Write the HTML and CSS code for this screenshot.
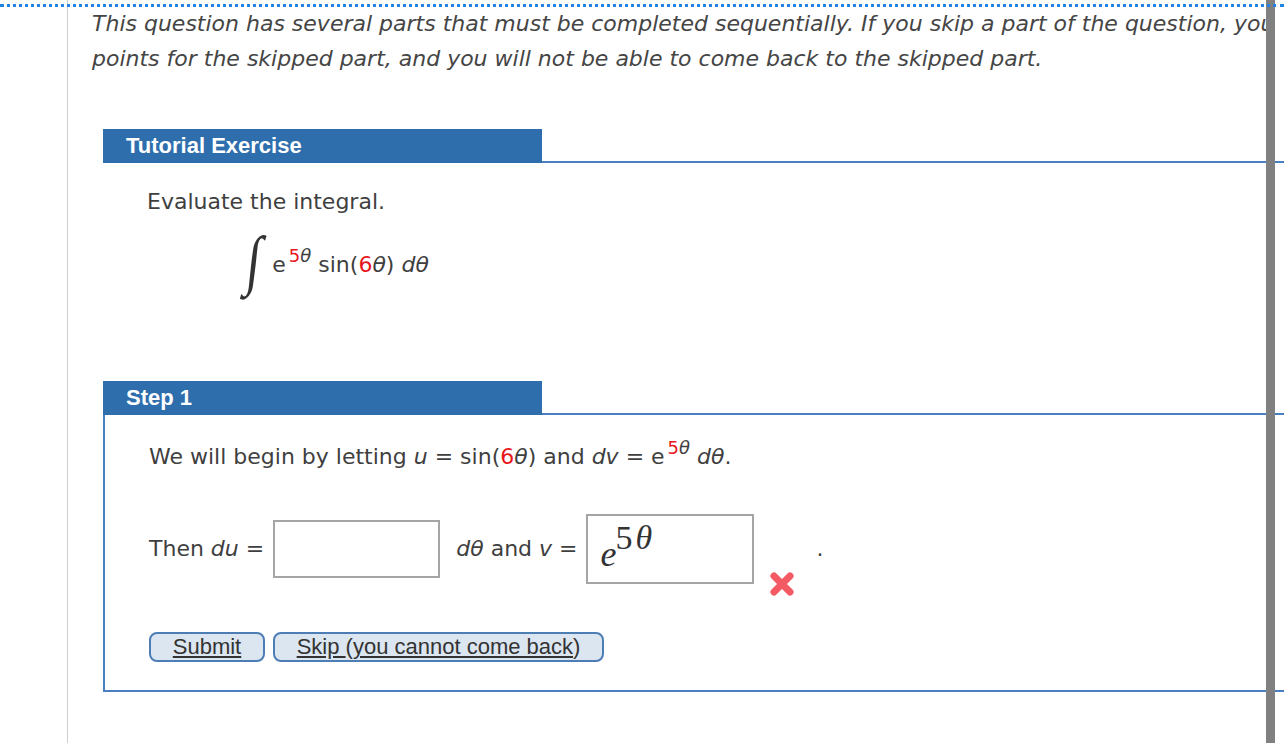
FILE: index.html
```html
<!DOCTYPE html>
<html>
<head>
<meta charset="utf-8">
<link rel="stylesheet" href="styles.css">
</head>
<body>
<div class="frame">
  <div class="gutter"></div>
  <div class="main">
    <p class="intro">This question has several parts that must be completed sequentially. If you skip a part of the question, you<br>points for the skipped part, and you will not be able to come back to the skipped part.</p>

    <section class="sec">
      <div class="sec-head"><div class="tab">Tutorial Exercise</div><div class="rule"></div></div>
      <div class="tut-body">
        <p class="txt">Evaluate the integral.</p>
        <div class="integral">
          <span class="int-sign">∫</span>
          <span class="int-expr">e<sup class="sup"><span class="red">5</span><i>θ</i></sup>sin(<span class="red">6</span><i>θ</i>) <i>d</i><i>θ</i></span>
        </div>
      </div>
    </section>

    <section class="sec step">
      <div class="sec-head"><div class="tab">Step 1</div><div class="rule"></div></div>
      <div class="step-body">
        <p class="txt">We will begin by letting <i>u</i> = sin(<span class="red">6</span><i>θ</i>) and <i>dv</i> = e<sup class="sup"><span class="red">5</span><i>θ</i></sup><i>dθ</i>.</p>
        <div class="ans-row">
          <span class="txt">Then <i>du</i> =</span>
          <span class="box box-du"></span>
          <span class="txt"><i>dθ</i> and <i>v</i> =</span>
          <span class="box box-v"><span class="mj-e">e</span><span class="mj-sup">5<i>θ</i></span></span>
          <svg class="xmark" width="30" height="30" viewBox="0 0 30 30"><path d="M7 7 L23 23 M23 7 L7 23" stroke="#f2444f" stroke-width="7" stroke-linecap="round" opacity="0.88"/></svg>
          <span class="txt dot">.</span>
        </div>
        <div class="buttons">
          <button class="btn btn-submit">Submit</button>
          <button class="btn btn-skip"><span class="u">Skip </span>(<span class="u">you cannot come back</span>)</button>
        </div>
      </div>
    </section>
  </div>
</div>
<div class="scrollbar"></div>
</body>
</html>
```

FILE: styles.css
```css
html, body {
  margin: 0;
  padding: 0;
  background: #fff;
  overflow: hidden;
  height: 743px;
}
body {
  font-family: "DejaVu Sans", Verdana, sans-serif;
  color: #3f3f3f;
  position: relative;
}
.frame {
  display: grid;
  grid-template-columns: 68px 1600px;
  min-height: 743px;
  position: relative;
}
.frame::before {
  content: "";
  position: absolute;
  left: 0;
  right: 0;
  top: 4px;
  border-top: 3px dotted #1e86e2;
  z-index: 2;
}
.gutter {
  border-right: 1px solid #cfcfcf;
}
.intro {
  margin: 0;
  padding: 6px 0 0 24px;
  font-style: italic;
  font-size: 22px;
  letter-spacing: 0;
  line-height: 35px;
  white-space: nowrap;
  color: #454545;
}
.sec {
  margin-left: 35px;
  margin-top: 53px;
}
.sec-head {
  display: flex;
  align-items: flex-end;
}
.tab {
  width: 416px;
  height: 34px;
  padding-left: 23px;
  background: #2f6ead;
  color: #fff;
  font-family: "Liberation Sans", Arial, sans-serif;
  font-weight: bold;
  font-size: 22px;
  line-height: 33px;
  flex: none;
}
.rule {
  flex: 1;
  border-bottom: 2px solid #4a80c2;
}
.tut-body {
  padding: 24px 0 0 44px;
}
.txt {
  font-size: 22px;
  line-height: 30px;
  margin: 0;
}
.red { color: #e8161c; }
.sup {
  font-size: 18px;
  vertical-align: 10px;
  line-height: 0;
  margin: 0 7px 0 3px;
}
.integral {
  display: flex;
  align-items: center;
  margin-left: 100px;
  margin-top: 9px;
  height: 68px;
}
.int-sign {
  font-family: "Liberation Serif", serif;
  font-style: italic;
  font-size: 52px;
  line-height: 68px;
  display: inline-block;
  transform: scaleY(1.27) skewX(-8deg);
  color: #333;
  margin-right: 11px;
}
.int-expr {
  font-size: 22px;
  line-height: 30px;
  margin-top: 9px;
}
.step {
  margin-top: 87px;
}
.step-body {
  border-left: 2px solid #4a80c2;
  border-bottom: 2px solid #4a80c2;
  padding: 27px 0 28px 44px;
}
.ans-row {
  display: flex;
  align-items: center;
  margin-top: 42px;
  height: 70px;
}
.box {
  display: inline-block;
  border: 2px solid #a5a5a5;
  background: #fff;
  box-sizing: border-box;
}
.box-du {
  width: 167px;
  height: 58px;
  margin: 0 16px 0 9px;
}
.box-v {
  width: 168px;
  height: 70px;
  margin-left: 8px;
  position: relative;
  font-family: "Liberation Serif", "Times New Roman", serif;
  color: #333;
}
.mj-e {
  position: absolute;
  left: 13px;
  top: 17px;
  font-style: italic;
  font-size: 36px;
}
.mj-sup {
  position: absolute;
  left: 28px;
  top: 3px;
  font-size: 34px;
  letter-spacing: 3px;
}
.xmark {
  align-self: flex-end;
  margin: 0 0 -15px 13px;
}
.dot {
  margin-left: 20px;
}
.buttons {
  display: flex;
  gap: 8px;
  margin-top: 48px;
}
.btn {
  height: 30px;
  border: 2px solid #4d7db5;
  border-radius: 8px;
  background: #dbe6f1;
  color: #333;
  font-family: "Liberation Sans", Arial, sans-serif;
  font-size: 22px;
  padding: 0;
  box-sizing: border-box;
  line-height: 26px;
}
.btn-submit {
  width: 116px;
  text-decoration: underline;
}
.btn-skip {
  width: 331px;
}
.u { text-decoration: underline; }
.scrollbar {
  position: absolute;
  top: 0;
  left: 1266px;
  width: 9px;
  height: 743px;
  background: #808080;
  z-index: 1;
}
```
